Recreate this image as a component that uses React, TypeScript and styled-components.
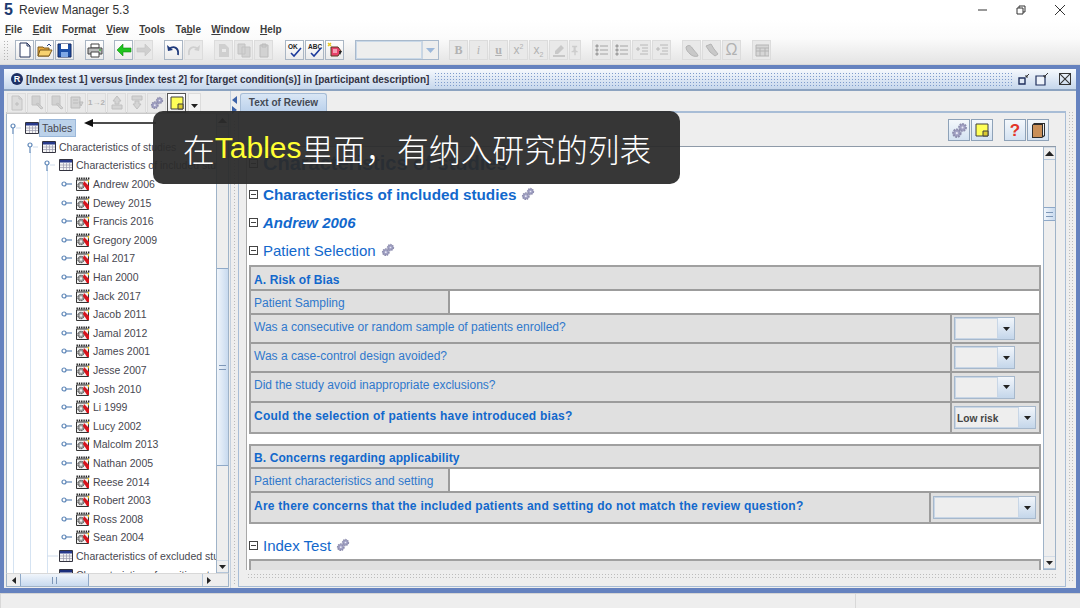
import React from "react";
import styled, { createGlobalStyle } from "styled-components";

const GlobalStyle = createGlobalStyle`
	html, body {
		margin: 0;
		padding: 0;
		width: 1080px;
		height: 608px;
		overflow: hidden;
		background: #eeeeee;
	}
	* { box-sizing: border-box; }
`;

const BLUE = "#6582bf";
const LINK = "#1268cc";

const studies = [
	"Andrew 2006", "Dewey 2015", "Francis 2016", "Gregory 2009", "Hal 2017",
	"Han 2000", "Jack 2017", "Jacob 2011", "Jamal 2012", "James 2001",
	"Jesse 2007", "Josh 2010", "Li 1999", "Lucy 2002", "Malcolm 2013",
	"Nathan 2005", "Reese 2014", "Robert 2003", "Ross 2008", "Sean 2004",
];

/* ---------- drawn icons ---------- */

const DocIcon = ({ dim }: { dim?: boolean }) => (
	<svg width="14" height="16" viewBox="0 0 14 16">
		<path d="M2 1h7l3 3v11H2z" fill={dim ? "#dcdcdc" : "#fff"} stroke={dim ? "#c4c4c4" : "#27345c"} />
		<path d="M9 1v3h3" fill="none" stroke={dim ? "#c4c4c4" : "#27345c"} />
		{dim && <path d="M5 9h4M7 7v4" stroke="#bdbdbd" />}
	</svg>
);

const FolderIcon = () => (
	<svg width="16" height="15" viewBox="0 0 16 15">
		<path d="M1 4h5l1 1h5v8H1z" fill="#e8a93c" stroke="#7d5a1c" />
		<path d="M3 7h12l-3 6H1z" fill="#f7d26f" stroke="#7d5a1c" />
		<path d="M10 3l2-2 2 2" fill="none" stroke="#27407c" />
	</svg>
);

const SaveIcon = () => (
	<svg width="15" height="15" viewBox="0 0 15 15">
		<path d="M1 1h13v13H1z" fill="#1c4fa8" stroke="#10275e" />
		<path d="M4 1h7v5H4z" fill="#fff" />
		<path d="M4 9h7v5H4z" fill="#7fa8e6" />
	</svg>
);

const PrintIcon = () => (
	<svg width="16" height="15" viewBox="0 0 16 15">
		<path d="M4 1h8v4H4z" fill="#fff" stroke="#444" />
		<path d="M1 5h14v6H1z" fill="#bdbdbd" stroke="#444" />
		<path d="M4 9h8v5H4z" fill="#fff" stroke="#444" />
		<circle cx="13" cy="7" r="1" fill="#46b846" />
	</svg>
);

const ArrowIcon = ({ back, dim }: { back?: boolean; dim?: boolean }) => (
	<svg width="16" height="14" viewBox="0 0 16 14">
		<path
			d={back ? "M1 7l6-6v4h8v4H7v4z" : "M15 7L9 1v4H1v4h8v4z"}
			fill={dim ? "#cfcfcf" : "#1fc41f"}
			stroke={dim ? "#c4c4c4" : "#138a13"}
			strokeWidth="0.6"
		/>
	</svg>
);

const UndoIcon = ({ redo }: { redo?: boolean }) => (
	<svg width="15" height="14" viewBox="0 0 15 14" style={redo ? { transform: "scaleX(-1)" } : undefined}>
		<path d="M3 6c5-4 10-1 9 6" fill="none" stroke={redo ? "#cfcfcf" : "#1f3a7c"} strokeWidth="1.8" />
		<path d="M1 2l1 6 5-1z" fill={redo ? "#cfcfcf" : "#1f3a7c"} />
	</svg>
);

const GhostIcon = ({ kind }: { kind: string }) => (
	<svg width="14" height="15" viewBox="0 0 14 15">
		{kind === "cut" && <path d="M2 1h6l4 4v9H2z M5 6h4v3H5z" fill="#cfcfcf" fillRule="evenodd" />}
		{kind === "copy" && <path d="M1 1h7v10H1z M5 4h8v10H5z" fill="#d2d2d2" stroke="#c2c2c2" />}
		{kind === "paste" && <path d="M3 2h8v12H3z M5 1h4v3H5z" fill="#d2d2d2" stroke="#bcbcbc" />}
		{kind === "pencil" && <path d="M2 1h8v9H2z M8 8l5 5-2 1-5-5z" fill="#d2d2d2" stroke="#c2c2c2" />}
		{kind === "pages" && <path d="M1 2h9v11H1z M3 5h5M3 8h5 M9 7h4l-2 4z" fill="#d4d4d4" stroke="#bcbcbc" />}
		{kind === "up" && <path d="M7 1l4 5H9v3H5V6H3z M2 10h10v4H2z" fill="#d4d4d4" stroke="#c0c0c0" />}
		{kind === "down" && <path d="M2 1h10v4H2z M5 6h4v3h2l-4 5-4-5h2z" fill="#d4d4d4" stroke="#c0c0c0" />}
		{kind === "link" && <path d="M1 4c3-3 5-1 7 2s5 5 5 7c-3 1-6 0-8-2S1 7 1 4z" fill="#c8c8c8" stroke="#b4b4b4" />}
		{kind === "link2" && <path d="M1 3l5-2 3 5 4 5-3 2-5-4z" fill="#c8c8c8" stroke="#b4b4b4" />}
		{kind === "marker" && <path d="M3 8l6-6 3 3-6 6H3z M1 12h12v2H1z" fill="#c8c8c8" />}
		{kind === "pin" && <path d="M3 1h7v2H8v4l3 2v1H8v4H6v-4H2V9l3-2V3H3z" fill="#cdcdcd" />}
		{kind === "list" && <path d="M1 2h2v2H1z M1 6h2v2H1z M1 10h2v2H1z M5 3h8M5 7h8M5 11h8" fill="#999" stroke="#a4a4a4" />}
		{kind === "outdent" && <path d="M5 2h8M7 5h6M7 8h6M5 11h8 M1 6h4 M3 4v4" fill="none" stroke="#b8b8b8" />}
		{kind === "grid" && <path d="M1 2h13v11H1z M1 5h13M1 8h13M5 5v8M10 5v8" fill="#d6d6d6" stroke="#b4b4b4" />}
	</svg>
);

const CheckIcon = ({ label }: { label: string }) => (
	<svg width="16" height="16" viewBox="0 0 16 16">
		<text x="1" y="7" fontSize="6.5" fontWeight="700" fontFamily="Liberation Sans" fill="#222">{label}</text>
		<path d="M4 11l3 3 7-8" fill="none" stroke="#1b3a9c" strokeWidth="1.6" />
	</svg>
);

const WandIcon = () => (
	<svg width="16" height="16" viewBox="0 0 16 16">
		<path d="M4 5h7l3 4-3 5H4z" fill="#e8426a" stroke="#5a3b20" />
		<path d="M6 8h4M6 10h4" stroke="#fff" />
		<path d="M1 1l3 3M4 1L1 4" stroke="#e8c820" strokeWidth="1.4" />
		<path d="M12 9l3 0-2 4z" fill="#222" />
	</svg>
);

const GearIcon = ({ size = 14 }: { size?: number }) => (
	<svg width={size} height={size} viewBox="0 0 14 14">
		<circle cx="9.5" cy="4.5" r="2.8" fill="#a3a3c6" stroke="#8d8dae" strokeWidth="1.7" strokeDasharray="1.4 0.7" />
		<circle cx="4.8" cy="9.2" r="3" fill="#a3a3c6" stroke="#8d8dae" strokeWidth="1.8" strokeDasharray="1.5 0.7" />
		<circle cx="9.5" cy="4.5" r="0.8" fill="#e8e8f4" />
		<circle cx="4.8" cy="9.2" r="0.9" fill="#e8e8f4" />
	</svg>
);

const NoteIcon = () => (
	<svg width="14" height="14" viewBox="0 0 14 14">
		<path d="M1 1h12v12H1z" fill="#ffff57" stroke="#3f3f3f" />
		<path d="M8 8h5v5H8z" fill="#d9c92f" stroke="#3f3f3f" />
	</svg>
);

const BookIcon = () => (
	<svg width="15" height="17" viewBox="0 0 15 17">
		<path d="M3 1h11v13l-3 2H1V3z" fill="#2d2d2d" />
		<path d="M2 3h9v12H2z" fill="#c98f58" />
		<path d="M12 2h1v11l-1 1z" fill="#eee" />
	</svg>
);

const TableIcon = ({ dark }: { dark?: boolean }) => (
	<svg width="14" height="12" viewBox="0 0 14 12">
		<path d="M0.5 0.5h13v11H0.5z" fill="#f4f4f4" stroke="#33333f" />
		<path d="M1 1h12v2.5H1z" fill={dark ? "#1c2f7c" : "#283a8c"} />
		<path d="M1 6h12M1 8.5h12M4.5 4v7M7.5 4v7M10.5 4v7" stroke="#9a9aae" strokeWidth="0.7" />
	</svg>
);

const StudyIcon = () => (
	<svg width="14" height="14" viewBox="0 0 14 14">
		<path d="M0.5 1.5h13" stroke="#222" strokeWidth="2" strokeDasharray="1.4 0.9" />
		<path d="M0.5 3h12v10.5H0.5z" fill="#f1f1f1" stroke="#333" />
		<circle cx="5" cy="8.5" r="3.2" fill="#9c9c9c" stroke="#333" strokeDasharray="1.2 0.8" />
		<circle cx="5" cy="8.5" r="1.2" fill="#eee" />
		<path d="M8 4l5 5 0 4-2 0-4-6z" fill="#d9141c" />
		<path d="M11 3l2 0 0 3z" fill="#e8c820" />
	</svg>
);

const Handle = ({ leaf, last }: { leaf?: boolean; last?: boolean }) => (
	<svg width="18" height="14" viewBox="0 0 18 14">
		{last ? (
			<path d="M6 7h11" stroke="#cfdcec" />
		) : leaf ? (
			<>
				<circle cx="6" cy="7" r="2" fill="#fff" stroke="#5f87b8" strokeWidth="1.2" />
				<path d="M8 7h6" stroke="#5f87b8" strokeWidth="1.2" />
			</>
		) : (
			<>
				<circle cx="6" cy="5" r="2" fill="#fff" stroke="#5f87b8" strokeWidth="1.2" />
				<path d="M6 7v6" stroke="#5f87b8" strokeWidth="1.2" />
				<path d="M9 7h5" stroke="#cfdcec" />
			</>
		)}
	</svg>
);

const Tri = ({ w = 7 }: { w?: number }) => (
	<svg width={w} height="4" viewBox="0 0 7 4">
		<path d="M0 0h7L3.5 4z" fill="#222" />
	</svg>
);

/* ---------- small pieces ---------- */

const Dropdown = ({ width, value }: { width: number; value?: string }) => (
	<Combo style={{ width }}>
		<ComboValue>{value}</ComboValue>
		<ComboArrow><Tri w={9} /></ComboArrow>
	</Combo>
);

const Heading = ({ children, gear, level, top }: { children: string; gear?: boolean; level: "large" | "bold" | "italic" | "plain"; top?: number }) => (
	<HeadingRow $level={level} $top={top}>
		<Minus />
		<HeadingText $level={level}>{children}</HeadingText>
		{gear && <GearIcon />}
	</HeadingRow>
);

const Question = ({ text, bold, combo, value, h = 29 }: { text: string; bold?: boolean; combo: number; value?: string; h?: number }) => (
	<Row $h={h}>
		<QuestionCell $bold={bold}>{text}</QuestionCell>
		<ComboCell>
			<Dropdown width={combo} value={value} />
		</ComboCell>
	</Row>
);

export default function App() {
	return (
		<Page>
			<GlobalStyle />

			<TitleBar>
				<AppMark>5</AppMark>
				<AppTitle>Review Manager 5.3</AppTitle>
				<WinButtons>
					<svg width="10" height="10" viewBox="0 0 10 10"><path d="M0 5h9" stroke="#555" strokeWidth="1.2" /></svg>
					<svg width="10" height="10" viewBox="0 0 10 10"><path d="M1 3h6v6H1z M3 3V1h6v6H7" fill="none" stroke="#333" /></svg>
					<svg width="12" height="12" viewBox="0 0 12 12"><path d="M1 1l10 10M11 1L1 11" stroke="#333" /></svg>
				</WinButtons>
			</TitleBar>

			<MenuBar>
				<MenuItem><u>F</u>ile</MenuItem>
				<MenuItem><u>E</u>dit</MenuItem>
				<MenuItem>Fo<u>r</u>mat</MenuItem>
				<MenuItem><u>V</u>iew</MenuItem>
				<MenuItem><u>T</u>ools</MenuItem>
				<MenuItem>Ta<u>b</u>le</MenuItem>
				<MenuItem><u>W</u>indow</MenuItem>
				<MenuItem><u>H</u>elp</MenuItem>
			</MenuBar>

			<Toolbar>
				<Grip />
				<Tool $ml={4}><DocIcon /></Tool>
				<Tool><FolderIcon /></Tool>
				<Tool><SaveIcon /></Tool>
				<Tool $ml={10}><PrintIcon /></Tool>
				<Tool $ml={9}><ArrowIcon back /></Tool>
				<Tool $off><ArrowIcon dim /></Tool>
				<Tool $ml={10}><UndoIcon /></Tool>
				<Tool $off><UndoIcon redo /></Tool>
				<Tool $ml={10} $off><GhostIcon kind="cut" /></Tool>
				<Tool $off><GhostIcon kind="copy" /></Tool>
				<Tool $off><GhostIcon kind="paste" /></Tool>
				<Tool $ml={11}><CheckIcon label="OK" /></Tool>
				<Tool><CheckIcon label="ABC" /></Tool>
				<Tool><WandIcon /></Tool>
				<FontBox>
					<FontValue />
					<FontArrow>
						<svg width="9" height="5" viewBox="0 0 9 5"><path d="M0 0h9L4.5 5z" fill="#9db8da" /></svg>
					</FontArrow>
				</FontBox>
				<Tool $ml={9} $off><Glyph $bold $serif>B</Glyph></Tool>
				<Tool $off><Glyph $italic $serif>i</Glyph></Tool>
				<Tool $off><Glyph $bold $serif $under>u</Glyph></Tool>
				<Tool $off><Glyph>x<sup>2</sup></Glyph></Tool>
				<Tool $off><Glyph>x<sub>2</sub></Glyph></Tool>
				<Tool $off><GhostIcon kind="marker" /></Tool>
				<Tool $off $w={12}><GhostIcon kind="pin" /></Tool>
				<Tool $ml={10} $off><GhostIcon kind="list" /></Tool>
				<Tool $off><GhostIcon kind="list" /></Tool>
				<Tool $off><GhostIcon kind="outdent" /></Tool>
				<Tool $off><GhostIcon kind="outdent" /></Tool>
				<Tool $ml={10} $off><GhostIcon kind="link" /></Tool>
				<Tool $off><GhostIcon kind="link2" /></Tool>
				<Tool $off><Glyph $large>Ω</Glyph></Tool>
				<Tool $ml={10} $off><GhostIcon kind="grid" /></Tool>
			</Toolbar>

			<Frame>
				<FrameTitle>
					<RBadge>R</RBadge>
					<FrameText>[Index test 1] versus [index test 2] for [target condition(s)] in [participant description]</FrameText>
					<Dots />
					<FrameButtons>
						<svg width="12" height="12" viewBox="0 0 12 12"><path d="M1 5h6v6H1z" fill="#dfe8f4" stroke="#1f2f5c" strokeWidth="1.4" /><path d="M11 1L8 4M8 2v2h2" fill="none" stroke="#333" /></svg>
						<svg width="14" height="14" viewBox="0 0 14 14"><path d="M1 4h9v9H1z" fill="#eef3fa" stroke="#1f2f5c" strokeWidth="1.2" /><path d="M13 1L9 5M9 3v2h2" fill="none" stroke="#333" /></svg>
						<CloseBox>
							<svg width="10" height="10" viewBox="0 0 10 10"><path d="M0 0l10 10M10 0L0 10" stroke="#333" strokeWidth="1.1" /></svg>
						</CloseBox>
					</FrameButtons>
				</FrameTitle>

				<Workspace>
					<LeftPane>
						<PaneTools>
							<Tool $off><DocIcon dim /></Tool>
							<Tool $off><GhostIcon kind="pencil" /></Tool>
							<Tool $off><GhostIcon kind="pencil" /></Tool>
							<Tool $off><GhostIcon kind="pages" /></Tool>
							<Tool $off><Glyph $small>1→2</Glyph></Tool>
							<Tool $off><GhostIcon kind="up" /></Tool>
							<Tool $off><GhostIcon kind="down" /></Tool>
							<Tool $off><GearIcon /></Tool>
							<Tool $dark><NoteIcon /></Tool>
							<MoreButton><Tri /></MoreButton>
						</PaneTools>

						<TreeArea>
							<Tree>
								<TreeRow $level={0}>
									<Handle />
									<TableIcon />
									<TreeLabel $selected>Tables</TreeLabel>
								</TreeRow>
								<TreeRow $level={1}>
									<Handle />
									<TableIcon />
									<TreeLabel>Characteristics of studies</TreeLabel>
								</TreeRow>
								<TreeRow $level={2}>
									<Handle />
									<TableIcon />
									<TreeLabel>Characteristics of included studies</TreeLabel>
								</TreeRow>
								{studies.map((name) => (
									<TreeRow key={name} $level={3}>
										<Handle leaf />
										<StudyIcon />
										<TreeLabel>{name}</TreeLabel>
									</TreeRow>
								))}
								<TreeRow $level={2}>
									<Handle last />
									<TableIcon />
									<TreeLabel>Characteristics of excluded studies</TreeLabel>
								</TreeRow>
								<TreeRow $level={2}>
									<Handle last />
									<TableIcon dark />
									<TreeLabel>Characteristics of awaiting studies</TreeLabel>
								</TreeRow>
							</Tree>
							<VScroll>
								<ScrollEnd><svg width="9" height="5" viewBox="0 0 9 5"><path d="M0 5h9L4.5 0z" fill="#222" /></svg></ScrollEnd>
								<VTrack>
									<VThumb $top={141} $h={198}><ThumbGrip /></VThumb>
								</VTrack>
								<ScrollEnd><Tri w={9} /></ScrollEnd>
							</VScroll>
						</TreeArea>

						<HScroll>
							<HEnd><svg width="4" height="7" viewBox="0 0 4 7"><path d="M4 0v7L0 3.5z" fill="#222" /></svg></HEnd>
							<HTrack>
								<HThumb><HGrip /></HThumb>
							</HTrack>
							<HEnd><svg width="4" height="7" viewBox="0 0 4 7"><path d="M0 0v7l4-3.5z" fill="#222" /></svg></HEnd>
						</HScroll>
					</LeftPane>

					<Splitter>
						<svg width="5" height="8" viewBox="0 0 5 8"><path d="M5 0v8L0 4z" fill="#3c62a8" /></svg>
						<svg width="5" height="8" viewBox="0 0 5 8"><path d="M0 0v8l5-4z" fill="#3c62a8" /></svg>
						<SplitDots />
					</Splitter>

					<RightPane>
						<TabStrip>
							<Tab>Text of Review</Tab>
						</TabStrip>
						<Panel>
							<PanelTools>
								<PanelButton><GearIcon size={17} /></PanelButton>
								<PanelButton><NoteIcon /></PanelButton>
								<PanelButton $ml={10}><HelpMark>?</HelpMark></PanelButton>
								<PanelButton><BookIcon /></PanelButton>
							</PanelTools>
							<ContentRow>
								<Review>
									<Heading level="large">Characteristics of studies</Heading>
									<Heading level="bold" gear>Characteristics of included studies</Heading>
									<Heading level="italic">Andrew 2006</Heading>
									<Heading level="plain" gear>Patient Selection</Heading>

									<Sheet $mt={1}>
										<Row $h={24}><SheetTitle>A. Risk of Bias</SheetTitle></Row>
										<Row $h={24}>
											<LabelCell>Patient Sampling</LabelCell>
											<InputCell />
										</Row>
										<Question text="Was a consecutive or random sample of patients enrolled?" combo={61} />
										<Question text="Was a case-control design avoided?" combo={61} />
										<Question text="Did the study avoid inappropriate exclusions?" combo={61} h={30} />
										<Question text="Could the selection of patients have introduced bias?" bold combo={82} value="Low risk" />
									</Sheet>

									<Sheet $mt={10}>
										<Row $h={23}><SheetTitle>B. Concerns regarding applicability</SheetTitle></Row>
										<Row $h={24}>
											<LabelCell>Patient characteristics and setting</LabelCell>
											<InputCell />
										</Row>
										<Row $h={29}>
											<QuestionCell $bold>Are there concerns that the included patients and setting do not match the review question?</QuestionCell>
											<ComboCell $wide>
												<Dropdown width={103} />
											</ComboCell>
										</Row>
									</Sheet>

									<Heading level="plain" gear top={7}>Index Test</Heading>
									<Sheet>
										<Row $h={24}><SheetTitle /></Row>
									</Sheet>
								</Review>
								<PageScroll>
									<ScrollEnd><svg width="9" height="5" viewBox="0 0 9 5"><path d="M0 5h9L4.5 0z" fill="#222" /></svg></ScrollEnd>
									<VTrack>
										<VThumb $top={47} $h={14}><ThumbGrip /></VThumb>
									</VTrack>
									<ScrollEnd><Tri w={9} /></ScrollEnd>
								</PageScroll>
							</ContentRow>
							<PanelFoot />
						</Panel>
						<SideGrip />
					</RightPane>
				</Workspace>
			</Frame>

			<StatusBar>
				<StatusCell $w={855} />
				<StatusCell />
			</StatusBar>

			<Pointer width="72" height="10" viewBox="0 0 72 10">
				<path d="M8 5h64" stroke="#111" strokeWidth="1.6" />
				<path d="M0 5l9-4v8z" fill="#111" />
			</Pointer>
			<Callout>
				在<CalloutWord>Tables</CalloutWord>里面，有纳入研究的列表
			</Callout>
		</Page>
	);
}

const Page = styled.div`
	position: relative;
	display: flex;
	flex-direction: column;
	width: 1080px;
	height: 608px;
	overflow: hidden;
	background: #eeeeee;
	font-family: "Liberation Sans", Arial, sans-serif;
`;

const TitleBar = styled.div`
	display: flex;
	align-items: center;
	height: 20px;
	padding-left: 4px;
	background: #ffffff;
`;

const AppMark = styled.span`
	width: 15px;
	font-size: 16px;
	font-weight: 700;
	color: #1c3a70;
`;

const AppTitle = styled.span`
	font-size: 12px;
	color: #333333;
`;

const WinButtons = styled.div`
	display: flex;
	align-items: center;
	gap: 28px;
	margin-left: auto;
	padding-right: 14px;
`;

const MenuBar = styled.div`
	display: flex;
	align-items: center;
	gap: 10.4px;
	height: 18px;
	padding-left: 5px;
	background: linear-gradient(#ffffff, #fbfbfb);
`;

const MenuItem = styled.span`
	font-size: 10px;
	font-weight: 700;
	color: #3c3c3c;
`;

const Toolbar = styled.div`
	display: flex;
	align-items: center;
	gap: 1px;
	height: 27px;
	padding: 0 0 2px 3px;
	background: linear-gradient(#fbfbfb, #e4e4e4);
	border-bottom: 1px solid #d8d8d8;
`;

const Grip = styled.div`
	width: 7px;
	height: 20px;
	background-image: radial-gradient(#b4b4b4 0.6px, transparent 0.8px);
	background-size: 3px 3px;
`;

const Tool = styled.div<{ $ml?: number; $off?: boolean; $w?: number; $dark?: boolean }>`
	display: flex;
	flex: none;
	align-items: center;
	justify-content: center;
	width: ${(p) => p.$w ?? 19}px;
	height: 20px;
	margin-left: ${(p) => p.$ml ?? 0}px;
	background: ${(p) => (p.$off ? "#e9e9e9" : "linear-gradient(#ffffff, #ebebeb)")};
	border: 1px solid ${(p) => (p.$dark ? "#555555" : p.$off ? "#dcdcdc" : "#aab6c4")};
`;

const Glyph = styled.span<{ $bold?: boolean; $italic?: boolean; $serif?: boolean; $under?: boolean; $small?: boolean; $large?: boolean }>`
	font-family: ${(p) => (p.$serif ? '"Liberation Serif", serif' : '"Liberation Sans", sans-serif')};
	font-size: ${(p) => (p.$small ? 8 : p.$large ? 16 : 12)}px;
	font-weight: ${(p) => (p.$bold || p.$small ? 700 : 400)};
	font-style: ${(p) => (p.$italic ? "italic" : "normal")};
	text-decoration: ${(p) => (p.$under ? "underline" : "none")};
	color: #b2b2b2;
	line-height: 1;

	sup, sub { font-size: 7px; line-height: 0; }
`;

const FontBox = styled.div`
	display: flex;
	flex: none;
	width: 84px;
	height: 20px;
	margin-left: 10px;
	border: 1px solid #a9b9cc;
	background: #eeeeee;
`;

const FontValue = styled.div`
	flex: 1;
	border: 1px solid #c9d8e8;
`;

const FontArrow = styled.div`
	display: flex;
	align-items: center;
	justify-content: center;
	width: 16px;
	border-left: 1px solid #c9d4e0;
`;

const Frame = styled.div`
	display: flex;
	flex-direction: column;
	height: 528px;
	background: #eeeeee;
	border: solid ${BLUE};
	border-width: 4px 4px 5px 4px;
`;

const FrameTitle = styled.div`
	display: flex;
	align-items: center;
	height: 22px;
	padding: 0 5px 0 7px;
	background: linear-gradient(#f6f9fd, #c6d7ec);
	border-bottom: 2px solid #8ca3c0;
`;

const RBadge = styled.span`
	display: flex;
	flex: none;
	align-items: center;
	justify-content: center;
	width: 12px;
	height: 12px;
	border-radius: 50%;
	background: #1d2f63;
	font-size: 9px;
	font-weight: 700;
	color: #ffffff;
`;

const FrameText = styled.span`
	margin-left: 3px;
	font-size: 10px;
	font-weight: 700;
	color: #333344;
	white-space: nowrap;
`;

const Dots = styled.div`
	flex: 1;
	height: 15px;
	margin: 0 5px;
	background-image: radial-gradient(#7f9ccc 0.6px, transparent 0.8px);
	background-size: 3px 3px;
`;

const FrameButtons = styled.div`
	display: flex;
	align-items: center;
	gap: 5px;
`;

const CloseBox = styled.div`
	display: flex;
	align-items: center;
	justify-content: center;
	width: 12px;
	height: 12px;
	margin-left: 5px;
	border: 1px solid #333333;
`;

const Workspace = styled.div`
	display: flex;
	flex: 1;
	min-height: 0;
`;

const LeftPane = styled.div`
	display: flex;
	flex-direction: column;
	width: 226px;
	padding: 2px 1px 2px 2px;
`;

const PaneTools = styled.div`
	display: flex;
	align-items: center;
	gap: 1px;
	height: 21px;
	padding-left: 1px;
	border-bottom: 2px solid #c8c8c8;
`;

const MoreButton = styled.div`
	display: flex;
	align-items: flex-end;
	justify-content: center;
	width: 13px;
	height: 20px;
	margin-left: 1px;
	padding-bottom: 4px;
	background: #f4f4f4;
	border: 1px solid #dcdcdc;
`;

const TreeArea = styled.div`
	display: flex;
	height: 459px;
	border-left: 1px solid #9fb3c8;
`;

const Tree = styled.div`
	flex: 1;
	min-width: 0;
	overflow: hidden;
	padding-top: 5px;
	background-color: #ffffff;
	background-image:
		linear-gradient(#d5e3f2, #d5e3f2),
		linear-gradient(#d5e3f2, #d5e3f2),
		linear-gradient(#d5e3f2, #d5e3f2);
	background-repeat: no-repeat;
	background-size: 1px 100%, 1px 100%, 1px 430px;
	background-position: 6px 20px, 23px 38px, 40px 56px;
`;

const TreeRow = styled.div<{ $level: number }>`
	display: flex;
	align-items: center;
	height: 18.6px;
	padding-left: ${(p) => p.$level * 17}px;
	white-space: nowrap;

	svg {
		flex: none;
	}
`;

const TreeLabel = styled.span<{ $selected?: boolean }>`
	margin-left: 1px;
	padding: 2px ${(p) => (p.$selected ? 3 : 2)}px 2px 2px;
	background: ${(p) => (p.$selected ? "#bcd2ea" : "transparent")};
	outline: ${(p) => (p.$selected ? "1px solid #9bb8da" : "none")};
	font-size: 10.5px;
	color: #474750;
`;

const VScroll = styled.div`
	display: flex;
	flex: none;
	flex-direction: column;
	width: 13px;
	background: #eeeeee;
	border-left: 1px solid #9fb3c8;
	border-right: 1px solid #9fb3c8;
`;

const PageScroll = styled(VScroll)`
	border-bottom: 1px solid #9fb3c8;
`;

const ScrollEnd = styled.div`
	display: flex;
	flex: none;
	align-items: center;
	justify-content: center;
	height: 13px;
	border-top: 1px solid #d4dce6;
	border-bottom: 1px solid #b4c6da;
	background: #eeeeee;
`;

const VTrack = styled.div`
	position: relative;
	flex: 1;
`;

const VThumb = styled.div<{ $top: number; $h: number }>`
	position: absolute;
	top: ${(p) => p.$top}px;
	right: 0;
	left: 0;
	display: flex;
	align-items: center;
	justify-content: center;
	height: ${(p) => p.$h}px;
	background: linear-gradient(90deg, #f0f5fb, #c8daef);
	border-top: 1px solid #8fa9c8;
	border-bottom: 1px solid #8fa9c8;
`;

const ThumbGrip = styled.div`
	width: 7px;
	height: 5px;
	border-top: 1px solid #7d97b8;
	border-bottom: 1px solid #7d97b8;
`;

const HScroll = styled.div`
	display: flex;
	align-items: center;
	height: 14px;
	padding: 0 13px 0 1px;
	border: 1px solid #9fb3c8;
	border-top-color: #d8d8d8;
	background: #eeeeee;
`;

const HEnd = styled.div`
	display: flex;
	flex: none;
	align-items: center;
	justify-content: center;
	width: 12px;
	height: 12px;
`;

const HTrack = styled.div`
	flex: 1;
	height: 12px;
	border-right: 1px solid #b4c6da;
`;

const HThumb = styled.div`
	display: flex;
	align-items: center;
	justify-content: center;
	width: 69px;
	height: 12px;
	background: linear-gradient(#f0f5fb, #c8daef);
	border-right: 1px solid #8fa9c8;
	border-left: 1px solid #8fa9c8;
`;

const HGrip = styled.div`
	width: 5px;
	height: 7px;
	border-right: 1px solid #7d97b8;
	border-left: 1px solid #7d97b8;
`;

const Splitter = styled.div`
	display: flex;
	flex: none;
	flex-direction: column;
	align-items: center;
	gap: 2px;
	width: 8px;
	padding-top: 5px;
	border-left: 1px solid #c4d0de;
`;

const SplitDots = styled.div`
	flex: 1;
	width: 4px;
	margin: 4px 0 2px;
	background-image: radial-gradient(#bcbcbc 0.6px, transparent 0.8px);
	background-size: 3px 3px;
`;

const RightPane = styled.div`
	position: relative;
	flex: 1;
	display: grid;
	grid-template-columns: 828px 10px;
	grid-template-rows: 20px 1fr;
	min-width: 0;
`;

const TabStrip = styled.div`
	display: flex;
	align-items: flex-end;
	grid-column: 1 / 3;
	padding-left: 2px;
`;

const Tab = styled.div`
	display: flex;
	align-items: center;
	justify-content: center;
	width: 87px;
	height: 18px;
	background: linear-gradient(#d9e6f5, #bcd2ec);
	border: 1px solid #a6bcd6;
	border-bottom: none;
	border-radius: 3px 3px 0 0;
	font-size: 10px;
	font-weight: 700;
	color: #444a55;
`;

const Panel = styled.div`
	display: flex;
	flex-direction: column;
	height: 476px;
	border: 1px solid #a8bdd6;
	border-top-width: 2px;
`;

const PanelTools = styled.div`
	display: flex;
	align-items: flex-start;
	justify-content: flex-end;
	gap: 1px;
	height: 33px;
	padding: 6px 16px 0 0;
`;

const PanelButton = styled.div<{ $ml?: number }>`
	display: flex;
	align-items: center;
	justify-content: center;
	width: 22px;
	height: 22px;
	margin-left: ${(p) => p.$ml ?? 0}px;
	background: linear-gradient(#f4f8fc, #d4e2f2);
	border: 1px solid #8ea2b8;
`;

const HelpMark = styled.span`
	font-size: 17px;
	font-weight: 700;
	color: #e2362a;
	line-height: 1;
`;

const ContentRow = styled.div`
	display: flex;
	height: 424px;
	margin: 0 9px 0 7px;
	border-top: 1px solid #8e9aa8;
	border-left: 1px solid #a8a8a8;
`;

const Review = styled.div`
	flex: 1;
	min-width: 0;
	overflow: hidden;
	padding: 4px 0 0 2px;
	background: #ffffff;
`;

const HeadingRow = styled.div<{ $level: string; $top?: number }>`
	display: flex;
	align-items: center;
	gap: 5px;
	height: ${(p) => (p.$level === "large" ? 24 : 28)}px;
	margin-top: ${(p) => p.$top ?? 0}px;
	margin-bottom: ${(p) => (p.$level === "large" ? 5 : 0)}px;
`;

const Minus = styled.span`
	position: relative;
	flex: none;
	width: 9px;
	height: 9px;
	border: 1px solid #444444;

	&::after {
		content: "";
		position: absolute;
		top: 3px;
		left: 1px;
		width: 5px;
		height: 1px;
		background: #444444;
	}
`;

const HeadingText = styled.span<{ $level: string }>`
	font-size: ${(p) => (p.$level === "large" ? 20 : p.$level === "bold" ? 15.25 : 15)}px;
	font-weight: ${(p) => (p.$level === "plain" ? 400 : 700)};
	font-style: ${(p) => (p.$level === "italic" ? "italic" : "normal")};
	color: ${LINK};
	white-space: nowrap;
`;

const Sheet = styled.div<{ $mt?: number }>`
	width: 792px;
	margin-top: ${(p) => p.$mt ?? 0}px;
	background: #e0e0e0;
	border: 2px solid #a0a0a0;
`;

const Row = styled.div<{ $h: number }>`
	display: flex;
	height: ${(p) => p.$h}px;
	border-bottom: 2px solid #9c9c9c;

	&:last-child {
		border-bottom: none;
	}
`;

const SheetTitle = styled.div`
	display: flex;
	align-items: center;
	padding: 3px 0 0 3px;
	font-size: 12px;
	font-weight: 700;
	letter-spacing: 0.1px;
	color: ${LINK};
`;

const LabelCell = styled.div`
	display: flex;
	flex: none;
	align-items: center;
	width: 197px;
	padding: 2px 0 0 3px;
	font-size: 12px;
	color: #2f78cc;
`;

const InputCell = styled.div`
	flex: 1;
	background: #ffffff;
	border-left: 2px solid #9c9c9c;
`;

const QuestionCell = styled.div<{ $bold?: boolean }>`
	flex: 1;
	min-width: 0;
	padding: ${(p) => (p.$bold ? 6 : 5)}px 0 0 3px;
	font-size: 12px;
	font-weight: ${(p) => (p.$bold ? 700 : 400)};
	letter-spacing: ${(p) => (p.$bold ? 0.25 : 0)}px;
	color: ${(p) => (p.$bold ? LINK : "#2f78cc")};
	white-space: nowrap;
`;

const ComboCell = styled.div<{ $wide?: boolean }>`
	display: flex;
	flex: none;
	align-items: center;
	width: ${(p) => (p.$wide ? 110 : 89)}px;
	padding-left: 2px;
	border-left: 2px solid #9c9c9c;
`;

const Combo = styled.div`
	display: flex;
	height: 23px;
	border: 1px solid #a6b8cc;
	background: #eeeeee;
`;

const ComboValue = styled.div`
	display: flex;
	flex: 1;
	align-items: center;
	padding: 1px 0 0 1px;
	border: 1px solid #c8d6e6;
	font-size: 10.2px;
	font-weight: 700;
	color: #444444;
`;

const ComboArrow = styled.div`
	display: flex;
	align-items: center;
	justify-content: center;
	width: 16px;
	background: linear-gradient(#f2f6fb, #c4d6ea);
`;

const PanelFoot = styled.div`
	height: 6px;
	margin: 3px 9px 0 8px;
	background-image: radial-gradient(#bcbcbc 0.6px, transparent 0.8px);
	background-size: 3px 3px;
`;

const SideGrip = styled.div`
	height: 470px;
	margin-left: 2px;
	width: 6px;
	background-image: radial-gradient(#bcbcbc 0.6px, transparent 0.8px);
	background-size: 3px 3px;
`;

const StatusBar = styled.div`
	display: flex;
	flex: 1;
	background: #eeeeee;
	border-top: 1px solid #d4d4d4;
`;

const StatusCell = styled.div<{ $w?: number }>`
	flex: ${(p) => (p.$w ? `0 0 ${p.$w}px` : "1")};
	border-left: 1px solid #d8d8d8;
`;

const Pointer = styled.svg`
	position: absolute;
	top: 118px;
	left: 84px;
`;

const Callout = styled.div`
	position: absolute;
	top: 111px;
	left: 153px;
	display: flex;
	align-items: center;
	width: 527px;
	height: 73px;
	padding-left: 30px;
	border-radius: 10px;
	background: rgba(42, 42, 42, 0.94);
	font-family: "Liberation Sans", "Noto Sans CJK SC", sans-serif;
	font-size: 31.8px;
	font-weight: 300;
	color: #ffffff;
	white-space: nowrap;
`;

const CalloutWord = styled.span`
	font-size: 30px;
	color: #ffff33;
`;
